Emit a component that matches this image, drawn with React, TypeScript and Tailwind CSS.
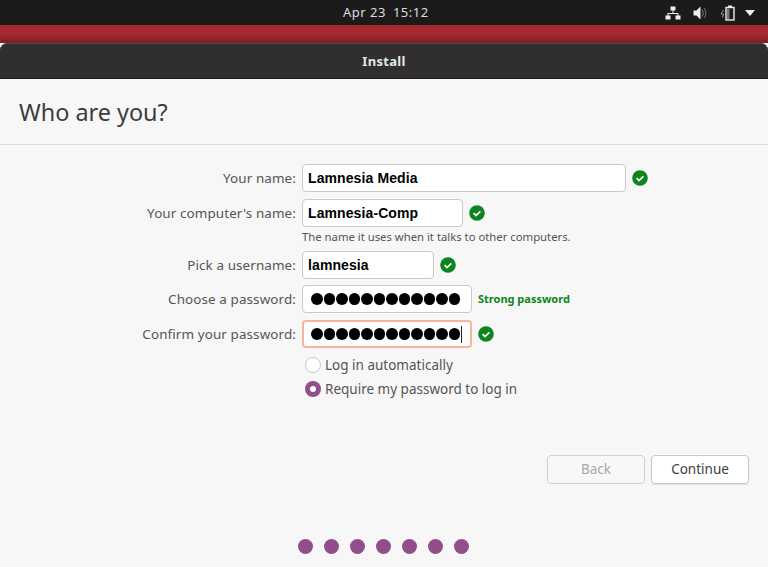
const font = "font-['Noto_Sans',sans-serif]";

const Check = () => (
    <svg width="16" height="16" viewBox="0 0 16 16" className="shrink-0">
        <circle cx="8" cy="8" r="7.8" fill="#0e8420" />
        <path d="M4.6 8.2l2.4 2.3 4.4-4.2" fill="none" stroke="#fff" strokeWidth="1.7" />
    </svg>
);

const Dots = ({ count }: { count: number }) => (
    <span className="flex gap-[1px]">
        {Array.from({ length: count }).map((_, i) => (
            <span key={i} className="w-[11.5px] h-[11.5px] rounded-full bg-black" />
        ))}
    </span>
);

const Row = ({ label, width, value, className, children, focus, after }: {
    label: string;
    width: string;
    value?: string;
    className?: string;
    children?: React.ReactNode;
    focus?: boolean;
    after?: React.ReactNode;
}) => (
    <div className={`flex items-center ${className ?? ""}`}>
        <div className="w-[296px] text-right text-[13.45px] text-[#555] tracking-[0.1px]">{label}</div>
        <div className={`ml-[6px] h-[28px] ${width} flex items-center pl-[5px] bg-white rounded-[4px] ${focus ? "border-2 border-[#f7b59d]" : "border border-[#cdc7c2]"}`}>
            {value && <span className="mt-[1px] text-[14px] font-bold text-black font-['Liberation_Sans',sans-serif] tracking-[0.1px]">{value}</span>}
            {children}
        </div>
        <div className="ml-[6px] flex items-center">{after ?? <Check />}</div>
    </div>
);

const App = () => {
    return (
        <div className={`h-[567px] w-[768px] overflow-hidden flex flex-col bg-[#f7f7f7] ${font}`}>
            <div className="h-[25px] shrink-0 bg-[#1b1b1b] flex items-center text-[#dcdcdc]">
                <div className="ml-[343px] text-[13px] tracking-[0.5px] flex gap-[7px]">
                    <span>Apr 23</span>
                    <span>15:12</span>
                </div>
                <div className="ml-[236px] flex items-center">
                    <svg width="16" height="14" viewBox="0 0 16 14" fill="#eee">
                        <rect x="5.5" y="0.5" width="5" height="4" />
                        <rect x="0.5" y="9.5" width="5" height="4" />
                        <rect x="10.5" y="9.5" width="5" height="4" />
                        <path d="M7.5 4h1v3h5v3h-1V8H3.5v2h-1V7h5z" />
                    </svg>
                    <svg width="15" height="14" viewBox="0 0 15 14" className="ml-[12px]">
                        <path d="M0.5 4.5h3l4-4v13l-4-4h-3z" fill="#eee" />
                        <path d="M9 3.5c1.5 1.5 1.5 5.5 0 7M11 2c2.4 2.5 2.4 7.5 0 10" fill="none" stroke="#777" strokeWidth="1" />
                    </svg>
                    <svg width="15" height="16" viewBox="0 0 15 16" className="ml-[12px]">
                        <path d="M3.5 5L1 9h2.5L2.5 12.5" fill="none" stroke="#999" strokeWidth="1" />
                        <rect x="6" y="2.5" width="8" height="12.5" fill="none" stroke="#eee" strokeWidth="1.4" />
                        <rect x="8" y="0.5" width="4" height="2" fill="#eee" />
                        <rect x="7" y="3.5" width="2.5" height="10.5" fill="#777" />
                    </svg>
                    <svg width="10" height="6" viewBox="0 0 10 6" className="ml-[10px]">
                        <path d="M0 0h10L5 6z" fill="#eee" />
                    </svg>
                </div>
            </div>
            <div className="h-[18px] shrink-0 bg-gradient-to-b from-[#a7282f] from-50% to-[#7d1d26]" />
            <div className="h-[35px] shrink-0 pt-[1px] rounded-t-[7px] bg-[#302e2e] border-t border-[#4a4847] flex items-center justify-center text-[13px] font-bold text-[#e6e6e6] tracking-[0.3px]">
                Install
            </div>
            <div className="h-[1px] shrink-0 bg-[#1f1e1e]" />
            <div className="h-[66px] shrink-0 border-b border-[#dcdcdc] pl-[19px] flex items-center">
                <h1 className="mt-[2px] text-[23.4px] text-[#3d3d3d]">Who are you?</h1>
            </div>
            <div className="flex flex-col pt-[19px]">
                <Row label="Your name:" width="w-[324px]" value="Lamnesia Media" />
                <Row label="Your computer's name:" width="w-[161px]" value="Lamnesia-Comp" className="mt-[7px]" />
                <div className="ml-[302px] h-[24px] text-[11.3px] leading-[20px] text-[#555]">
                    The name it uses when it talks to other computers.
                </div>
                <Row label="Pick a username:" width="w-[132px]" value="lamnesia" />
                <Row
                    label="Choose a password:"
                    width="w-[170px]"
                    className="mt-[6px]"
                    after={<span className="text-[11px] font-bold text-[#0e8420]">Strong password</span>}
                >
                    <span className="ml-[3px]"><Dots count={12} /></span>
                </Row>
                <Row label="Confirm your password:" width="w-[170px]" className="mt-[7px]" focus>
                    <span className="ml-[2px]"><Dots count={12} /></span>
                    <span className="ml-[0.5px] w-[1px] h-[17px] bg-[#222]" />
                </Row>
                <label className="ml-[305px] mt-[5px] h-[24px] flex items-center gap-[4px] text-[13.5px] text-[#555]">
                    <span className="w-[16px] h-[16px] rounded-full bg-white border border-[#cdc7c2]" />
                    Log in automatically
                </label>
                <label className="ml-[305px] h-[24px] flex items-center gap-[4px] text-[13.5px] text-[#555]">
                    <span className="w-[16px] h-[16px] rounded-full bg-[#924d8b] flex items-center justify-center">
                        <span className="w-[6px] h-[6px] rounded-full bg-white" />
                    </span>
                    Require my password to log in
                </label>
                <div className="mt-[54px] ml-[547px] flex gap-[6px]">
                    <button className="w-[98px] h-[29px] rounded-[4px] border border-[#d5d0cc] bg-[#f8f8f8] text-[13.5px] text-[#a9a9a9]">Back</button>
                    <button className="w-[98px] h-[29px] rounded-[4px] border border-[#cdc7c2] bg-white shadow-[0_1px_1px_rgba(0,0,0,0.1)] text-[13.5px] text-[#3d3d3d]">Continue</button>
                </div>
                <div className="mt-[55px] ml-[298px] flex gap-[11px]">
                    {[0, 1, 2, 3, 4, 5, 6].map((i) => (
                        <span key={i} className="w-[15px] h-[15px] rounded-full bg-[#924d8b]" />
                    ))}
                </div>
            </div>
        </div>
    );
};

export default App;
